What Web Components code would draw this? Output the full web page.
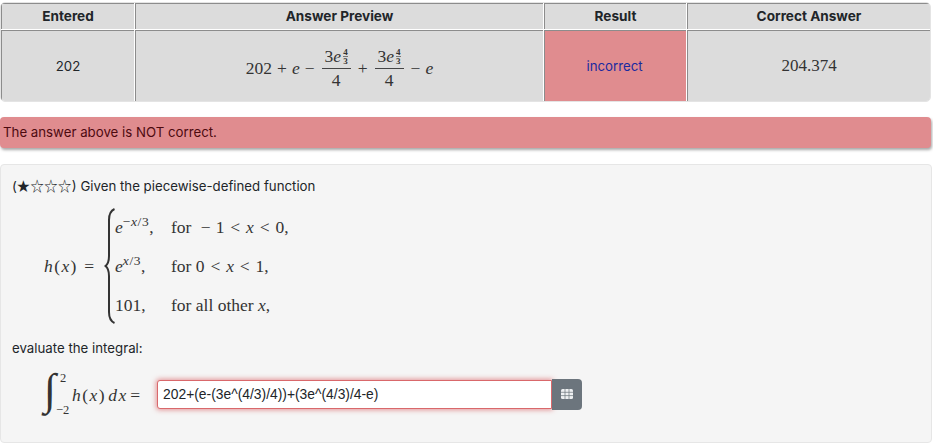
<!DOCTYPE html>
<html>
<head>
<meta charset="utf-8">
<title>Attempt results</title>
<style>
  html, body { margin: 0; padding: 0; background: #fff; }
  body { width: 933px; height: 443px; overflow: hidden; font: 13.25px Inter, "Liberation Sans", sans-serif; color: #212529; }
  .stars { font-family: "Noto Sans CJK SC", "DejaVu Sans", sans-serif; letter-spacing: .5px; }
</style>
</head>
<body>
<attempt-table></attempt-table>
<attempt-alert>The answer above is NOT correct.</attempt-alert>
<problem-card>
  <span slot="intro">(<span class="stars">★☆☆☆</span>) Given the piecewise-defined function</span>
  <span slot="prompt">evaluate the integral:</span>
  <answer-input slot="answer" value="202+(e-(3e^(4/3)/4))+(3e^(4/3)/4-e)"></answer-input>
</problem-card>

<script>
// Shared styles for the typeset maths
const mathCss = `
  .m { font-family: "Liberation Serif", serif; font-size: 17.5px; color: #333; white-space: nowrap; }
  .m i { font-style: italic; }
  .op { margin: 0 5px; }
  .rel { margin: 0 1.5px; }
  .frac { display: inline-flex; flex-direction: column; align-items: center; vertical-align: 12px; margin: 0 2px; }
  .frac .num { padding: 0 3px 2px; border-bottom: 1px solid #444; line-height: 20px; }
  .frac .den { padding-top: 3px; line-height: 17px; }
  sup { font-size: 13.5px; line-height: 0; vertical-align: 7px; letter-spacing: .6px; }
  .tiny { display: inline-flex; flex-direction: column; align-items: center; font-size: 9px; line-height: 8px; vertical-align: 7px; margin-left: 2px; font-weight: bold; }
  .tiny span:first-child { border-bottom: 1px solid #777; }
`;

// Results table at the top of the page
class AttemptTable extends HTMLElement {
  constructor() {
    super();
    this.attachShadow({ mode: 'open' });
    const frac = `<span class="frac"><span class="num">3<i>e</i><span class="tiny"><span>4</span><span>3</span></span></span><span class="den">4</span></span>`;
    this.shadowRoot.innerHTML = `
      <style>
        ${mathCss}
        :host { display: block; margin: 2px 2px 0 0; }
        .grid {
          display: grid;
          grid-template-columns: 133px 408px 142px 243px;
          grid-template-rows: 26px 71px;
          gap: 1px;
          background: #fff;
          border: 1px solid #e4e4e4;
          border-radius: 5px;
          overflow: hidden;
          width: 931px;
          box-sizing: border-box;
        }
        .c {
          background: #dcdcdc;
          display: flex;
          align-items: center;
          justify-content: center;
          box-sizing: border-box;
          border-top: 1px solid #8c8c8c;
          border-left: 1px solid #8c8c8c;
        }
        .h { font-weight: 700; font-size: 13.6px; padding-bottom: 2px; }
        .bad { background: #e08c8f; color: #1a2aa0; padding-right: 2px; }
        .expr { padding-top: 2px; }
        .plain { font-size: 17px; }
      </style>
      <div class="grid">
        <div class="c h">Entered</div>
        <div class="c h">Answer Preview</div>
        <div class="c h">Result</div>
        <div class="c h">Correct Answer</div>
        <div class="c">202</div>
        <div class="c"><span class="m expr">202<span class="op">+</span><i>e</i><span class="op">−</span>${frac}<span class="op">+</span>${frac}<span class="op">−</span><i>e</i></span></div>
        <div class="c bad">incorrect</div>
        <div class="c"><span class="m plain">204.374</span></div>
      </div>`;
  }
}

// Red message strip under the table
class AttemptAlert extends HTMLElement {
  constructor() {
    super();
    this.attachShadow({ mode: 'open' });
    this.shadowRoot.innerHTML = `
      <style>
        :host {
          display: block;
          margin: 15px 2px 0 0;
          height: 31px;
          line-height: 31px;
          padding-left: 3px;
          background: #e08c8f;
          color: #4d0a10;
          border-radius: 4px;
          box-shadow: 1px 2px 3px rgba(0,0,0,.35);
        }
      </style>
      <slot></slot>`;
  }
}

// The problem statement with the piecewise function and answer row
class ProblemCard extends HTMLElement {
  constructor() {
    super();
    this.attachShadow({ mode: 'open' });
    this.shadowRoot.innerHTML = `
      <style>
        ${mathCss}
        :host {
          display: block;
          margin: 16px 1px 0 0;
          height: 279px;
          box-sizing: border-box;
          padding: 13px 11px;
          background: #f5f5f5;
          border: 1px solid #e6e6e6;
          border-radius: 4px;
        }
        .intro, .prompt { line-height: 16px; }
        .piecewise { display: flex; align-items: center; margin: 13px 0 0 32px; height: 118px; }
        .lhs { width: 60px; display: flex; justify-content: space-between; padding-right: 10px; box-sizing: border-box; }
        .lhs .op { margin: 0; }
        .wide { letter-spacing: 1.4px; }
        .piecewise svg { margin-right: -1px; flex: none; }
        .rows {
          display: grid;
          grid-template-columns: 56px auto;
          grid-auto-rows: 39px;
          align-items: center;
        }
        .prompt { margin-top: 15px; }
        .answer { display: flex; align-items: center; margin: 16px 0 0 32px; height: 44px; }
        .int { font-size: 44px; line-height: 44px; margin-top: -9px; }
        .limits { display: flex; flex-direction: column; justify-content: space-between; height: 44px; width: 13px; font-size: 12.5px; line-height: 12px; margin-right: 3px; }
        .limits span:first-child { margin-left: 4px; }
        .eq { width: 68px; margin-right: 17px; padding-top: 3px; display: flex; justify-content: space-between; }
        .eq .op { margin: 0; }
      </style>
      <div class="intro"><slot name="intro"></slot></div>
      <div class="piecewise">
        <span class="m lhs"><span class="wide"><i>h</i>(<i>x</i>)</span><span class="op">=</span></span>
        <svg width="12" height="116" viewBox="0 0 12 116" fill="none" stroke="#333" stroke-width="2">
          <path d="M10.5 1 C6 3 5 7 5 12 V48 C5 54 4 56 1.5 58 C4 60 5 62 5 68 V104 C5 109 6 113 10.5 115"/>
        </svg>
        <div class="rows m">
          <span><i>e</i><sup>−<i>x</i>/3</sup>,</span><span>for <span class="op">−</span>1<span class="rel"> &lt; </span><i>x</i><span class="rel"> &lt; </span>0,</span>
          <span><i>e</i><sup><i>x</i>/3</sup>,</span><span>for 0<span class="rel"> &lt; </span><i>x</i><span class="rel"> &lt; </span>1,</span>
          <span>101,</span><span>for all other <i>x</i>,</span>
        </div>
      </div>
      <div class="prompt"><slot name="prompt"></slot></div>
      <div class="answer">
        <span class="m int">∫</span>
        <span class="m limits"><span>2</span><span>−2</span></span>
        <span class="m eq"><span class="wide"><i>h</i>(<i>x</i>)</span> <i class="wide">dx</i> <span class="op">=</span></span>
        <slot name="answer"></slot>
      </div>`;
  }
}

// Text field with the equation-editor button attached
class AnswerInput extends HTMLElement {
  constructor() {
    super();
    this.attachShadow({ mode: 'open' });
    this.shadowRoot.innerHTML = `
      <style>
        :host { display: flex; align-items: center; }
        .field {
          width: 395px;
          height: 29px;
          box-sizing: border-box;
          border: 1px solid #d9686b;
          border-radius: 3px 0 0 3px;
          background: #fff;
          padding: 0 5px;
          font: 13.85px/27px "Liberation Sans", sans-serif;
          color: #212529;
          box-shadow: 0 0 5px 1px rgba(217,83,87,.6);
          position: relative;
        }
        .btn {
          width: 30px;
          height: 31px;
          background: #6c757d;
          border-radius: 0 4px 4px 0;
          display: flex;
          align-items: center;
          justify-content: center;
          position: relative;
        }
      </style>
      <div class="field"></div>
      <div class="btn">
        <svg width="12" height="10" viewBox="0 0 12 10">
          <rect width="12" height="10" rx="1.5" fill="#eef0f2"/>
          <path d="M4 0V10M8 0V10M0 3.3H12M0 6.6H12" stroke="#6c757d" stroke-width=".7"/>
        </svg>
      </div>`;
    this.shadowRoot.querySelector('.field').textContent = this.getAttribute('value');
  }
}

customElements.define('attempt-table', AttemptTable);
customElements.define('attempt-alert', AttemptAlert);
customElements.define('problem-card', ProblemCard);
customElements.define('answer-input', AnswerInput);
</script>
</body>
</html>
